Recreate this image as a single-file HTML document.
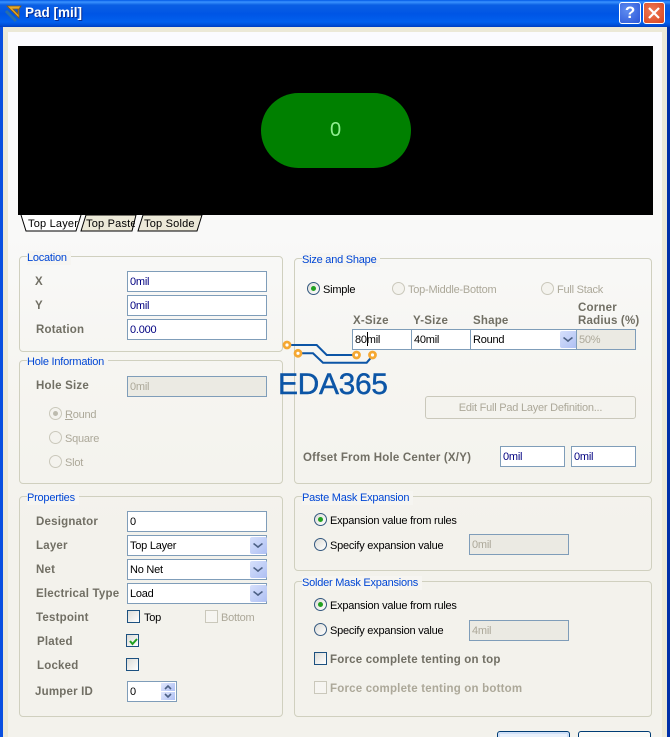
<!DOCTYPE html>
<html><head><meta charset="utf-8"><style>
html,body{margin:0;padding:0;width:670px;height:737px;overflow:hidden;background:#ece9d8}
body{position:relative;font-family:"Liberation Sans",sans-serif;font-size:11px;letter-spacing:-.23px;color:#000}
div,span{position:absolute;box-sizing:border-box;white-space:nowrap}
svg{position:absolute;overflow:visible}
.gb{border:1px solid #d0d0bf;border-radius:4px}
.gt{color:#0046d5;line-height:14px;height:14px;background:#f6f5f1;padding:0 4px 0 0;margin-top:1px}
.l{font-weight:bold;color:#716f64;line-height:14px;height:14px;letter-spacing:.2px;font-size:11.5px;margin-top:1px}
.t{line-height:14px;height:14px;margin-top:1px}
.d{color:#aca899;line-height:14px;height:14px;margin-top:1px}
.i{background:#fff;border:1px solid #7f9db9;height:21px;line-height:21px;padding-left:2px;color:#000}
.b{color:#000080}
.x{background:#ebeae3;color:#aca899}
.dd{width:17px;height:17px;background:linear-gradient(135deg,#d6e0fb,#aebff3);border-radius:2px}
.dd:after{content:"";position:absolute;left:4px;top:3px;width:6px;height:6px;border:solid #4d6185;border-width:0 2px 2px 0;transform:scale(.9,.7) rotate(45deg)}
.cb{width:13px;height:13px;border:1px solid #1c5180;background:linear-gradient(135deg,#dcdcd7,#fff)}
.cd{border-color:#cac8bb;background:#f6f5f1}
.r{width:13px;height:13px;border-radius:50%;border:1px solid #33587f;background:linear-gradient(135deg,#dcdcd7,#fff)}
.rd{border-color:#cac8bb;background:#f4f3ee}
.r i{position:absolute;left:3px;top:3px;width:5px;height:5px;border-radius:50%;background:#21a121}
.rd i{background:#bdbbae}
.tab{font-size:11px;letter-spacing:.2px;line-height:14px;height:14px;top:217px}
</style></head><body>
<div style="left:0;top:0;width:670px;height:27px;background:linear-gradient(#0058e6 0,#3a93ff 2px,#0a5fe4 5px,#0055e5 14px,#0260ee 22px,#0050d8 25px,#003dc0 27px)"></div>
<div style="left:0;top:27px;width:3px;height:710px;background:#0a50e0"></div>
<div style="left:667px;top:27px;width:3px;height:710px;background:#0030a8"></div>
<div style="left:8px;top:32px;width:654px;height:705px;background:linear-gradient(#fbfbff 0,#f9f9f8 200px,#f6f5f1 340px,#f3f2ec 500px,#f3f2ec 100%)"></div>
<svg style="left:5px;top:4px" width="18" height="18" viewBox="0 0 18 18"><path d="M2 2H16L14 5 H8L13 10 V5 L14 5 V14Z" fill="#e3a82a" stroke="#8a5c10" stroke-width=".8"/><path d="M1 7L11 17" stroke="#2a6fa8" stroke-width="3"/></svg>
<div style="left:25px;top:5px;color:#fff;font-weight:bold;font-size:13.5px;letter-spacing:0;line-height:16px;text-shadow:1px 1px 0 #0a2c90">Pad [mil]</div>
<div style="left:619px;top:2px;width:22px;height:22px;border:1px solid #fff;border-radius:3px;background:radial-gradient(circle at 35% 35%,#5f8df0,#2a55d8);color:#fff;font-weight:bold;font-size:17px;line-height:20px;text-align:center">?</div>
<div style="left:643px;top:2px;width:22px;height:22px;border:1px solid #fff;border-radius:3px;background:radial-gradient(circle at 40% 40%,#ee7a55,#d8431e)"><svg style="left:4px;top:4px" width="12" height="12"><path d="M1 1L11 11M11 1L1 11" stroke="#fff" stroke-width="2.2"/></svg></div>

<div style="left:18px;top:46px;width:635px;height:169px;background:#000"></div>
<div style="left:261px;top:93px;width:150px;height:75px;border-radius:38px;background:#008000"></div>
<div style="left:330px;top:119px;color:#90ee90;font-size:20px;letter-spacing:0;line-height:23px">0</div>

<svg style="left:18px;top:214px" width="200" height="18"><path d="M3 1L8 17H58L63 1" fill="#fff" stroke="#000"/><path d="M63 17L68 1H118L114 17H63Z" fill="#ece9d8" stroke="#000"/><path d="M120 17L125 1H184L179 17H120Z" fill="#ece9d8" stroke="#000"/></svg>
<div class="tab" style="left:28px;width:50px;overflow:hidden">Top Layer</div>
<div class="tab" style="left:86px;width:49px;overflow:hidden">Top Paste</div>
<div class="tab" style="left:144px;width:51px;overflow:hidden">Top Solder</div>

<div class="gb" style="left:19px;top:256px;width:264px;height:96px"></div>
<div class="gt" style="left:27px;top:250px">Location</div>
<div class="l" style="left:35px;top:274px">X</div>
<div class="l" style="left:35px;top:298px">Y</div>
<div class="l" style="left:36px;top:322px">Rotation</div>
<div class="i b" style="left:127px;top:271px;width:140px">0mil</div>
<div class="i b" style="left:127px;top:295px;width:140px">0mil</div>
<div class="i b" style="left:127px;top:319px;width:140px">0.000</div>

<div class="gb" style="left:19px;top:360px;width:264px;height:124px"></div>
<div class="gt" style="left:27px;top:354px">Hole Information</div>
<div class="l" style="left:36px;top:378px">Hole Size</div>
<div class="i x" style="left:127px;top:376px;width:140px">0mil</div>
<div class="r rd" style="left:49px;top:407px"><i></i></div><div class="d" style="left:65px;top:407px"><u>R</u>ound</div>
<div class="r rd" style="left:49px;top:431px"></div><div class="d" style="left:65px;top:431px">Square</div>
<div class="r rd" style="left:49px;top:455px"></div><div class="d" style="left:65px;top:455px">Slot</div>

<div class="gb" style="left:19px;top:496px;width:264px;height:221px"></div>
<div class="gt" style="left:27px;top:490px">Properties</div>
<div class="l" style="left:36px;top:514px">Designator</div>
<div class="l" style="left:36px;top:538px">Layer</div>
<div class="l" style="left:36px;top:562px">Net</div>
<div class="l" style="left:36px;top:586px">Electrical Type</div>
<div class="l" style="left:36px;top:610px">Testpoint</div>
<div class="l" style="left:37px;top:634px">Plated</div>
<div class="l" style="left:37px;top:658px">Locked</div>
<div class="l" style="left:35px;top:684px">Jumper ID</div>
<div class="i" style="left:127px;top:511px;width:140px">0</div>
<div class="i" style="left:127px;top:535px;width:140px">Top Layer<div class="dd" style="left:122px;top:1px"></div></div>
<div class="i" style="left:127px;top:559px;width:140px">No Net<div class="dd" style="left:122px;top:1px"></div></div>
<div class="i" style="left:127px;top:583px;width:140px">Load<div class="dd" style="left:122px;top:1px"></div></div>
<div class="cb" style="left:127px;top:610px"></div><div class="t" style="left:144px;top:610px">Top</div>
<div class="cb cd" style="left:205px;top:610px"></div><div class="d" style="left:221px;top:610px">Bottom</div>
<div class="cb" style="left:126px;top:634px"><svg style="left:1px;top:1px" width="11" height="11"><path d="M2 5L4.5 8L9 3" fill="none" stroke="#21a121" stroke-width="2"/></svg></div>
<div class="cb" style="left:126px;top:658px"></div>
<div class="i" style="left:127px;top:681px;width:50px">0</div>
<div style="left:161px;top:683px;width:14px;height:8px;background:linear-gradient(135deg,#e1e8fd,#aebff3)"><svg width="14" height="8"><path d="M4 6L7 3L10 6" fill="none" stroke="#4d6185" stroke-width="1.6"/></svg></div>
<div style="left:161px;top:692px;width:14px;height:8px;background:linear-gradient(135deg,#e1e8fd,#aebff3)"><svg width="14" height="8"><path d="M4 2L7 5L10 2" fill="none" stroke="#4d6185" stroke-width="1.6"/></svg></div>

<div class="gb" style="left:294px;top:258px;width:358px;height:226px"></div>
<div class="gt" style="left:302px;top:252px">Size and Shape</div>
<div class="r" style="left:307px;top:282px"><i></i></div><div class="t" style="left:323px;top:282px">Simple</div>
<div class="r rd" style="left:392px;top:282px"></div><div class="d" style="left:408px;top:282px">Top-Middle-Bottom</div>
<div class="r rd" style="left:541px;top:282px"></div><div class="d" style="left:557px;top:282px">Full Stack</div>
<div class="l" style="left:353px;top:313px">X-Size</div>
<div class="l" style="left:413px;top:313px">Y-Size</div>
<div class="l" style="left:473px;top:313px">Shape</div>
<div class="l" style="left:578px;top:300px">Corner</div>
<div class="l" style="left:578px;top:313px">Radius (%)</div>
<div class="i" style="left:352px;top:329px;width:60px">80mil</div>
<div style="left:367px;top:332px;width:1px;height:14px;background:#000"></div>
<div class="i" style="left:411px;top:329px;width:60px">40mil</div>
<div class="i" style="left:470px;top:329px;width:107px">Round<div class="dd" style="left:89px;top:1px"></div></div>
<div class="i x" style="left:576px;top:329px;width:60px">50%</div>

<div style="left:425px;top:396px;width:211px;height:23px;border:1px solid #cac8bb;border-radius:3px;background:#f4f3ee;color:#aca899;text-align:center;line-height:23px">Edit Full Pad Layer Definition...</div>
<div class="l" style="left:303px;top:450px">Offset From Hole Center (X/Y)</div>
<div class="i b" style="left:500px;top:446px;width:65px">0mil</div>
<div class="i b" style="left:571px;top:446px;width:65px">0mil</div>

<div class="gb" style="left:294px;top:496px;width:358px;height:75px"></div>
<div class="gt" style="left:302px;top:490px">Paste Mask Expansion</div>
<div class="r" style="left:314px;top:513px"><i></i></div><div class="t" style="left:330px;top:513px">Expansion value from rules</div>
<div class="r" style="left:314px;top:538px"></div><div class="t" style="left:330px;top:538px">Specify expansion value</div>
<div class="i x" style="left:469px;top:534px;width:100px">0mil</div>

<div class="gb" style="left:294px;top:581px;width:358px;height:136px"></div>
<div class="gt" style="left:302px;top:575px">Solder Mask Expansions</div>
<div class="r" style="left:314px;top:598px"><i></i></div><div class="t" style="left:330px;top:598px">Expansion value from rules</div>
<div class="r" style="left:314px;top:623px"></div><div class="t" style="left:330px;top:623px">Specify expansion value</div>
<div class="i x" style="left:469px;top:620px;width:100px">4mil</div>
<div class="cb" style="left:314px;top:652px"></div><div class="l" style="left:330px;top:652px">Force complete tenting on top</div>
<div class="cb cd" style="left:314px;top:681px"></div><div class="l" style="left:330px;top:681px;color:#aca899">Force complete tenting on bottom</div>

<div style="left:497px;top:731px;width:73px;height:22px;border:1px solid #003c74;border-radius:3px;background:#e8f0fb;box-shadow:inset 0 0 0 2px #cfe0f8"></div>
<div style="left:578px;top:731px;width:73px;height:22px;border:1px solid #003c74;border-radius:3px;background:#fbfbf8"></div>

<svg style="left:280px;top:338px" width="110" height="62" viewBox="0 0 110 62">
<path d="M7.6 7H36.7L46.7 17H76.7" fill="none" stroke="#0c55a6" stroke-width="2"/>
<path d="M17.7 15.3H33L43 24.7H86.7L92.7 17.7" fill="none" stroke="#0c55a6" stroke-width="2"/>
<circle cx="7" cy="7" r="3" fill="#fff" stroke="#f5a832" stroke-width="2.8"/>
<circle cx="18" cy="15.3" r="3" fill="#fff" stroke="#f5a832" stroke-width="2.8"/>
<circle cx="76.5" cy="17" r="3" fill="#fff" stroke="#f5a832" stroke-width="2.8"/>
<circle cx="92.5" cy="17" r="3" fill="#fff" stroke="#f5a832" stroke-width="2.8"/>
</svg>
<div style="left:278px;top:368px;color:#0c55a6;font-size:30px;line-height:34px;letter-spacing:-.35px;-webkit-text-stroke:.4px #0c55a6">EDA365</div>
</body></html>
